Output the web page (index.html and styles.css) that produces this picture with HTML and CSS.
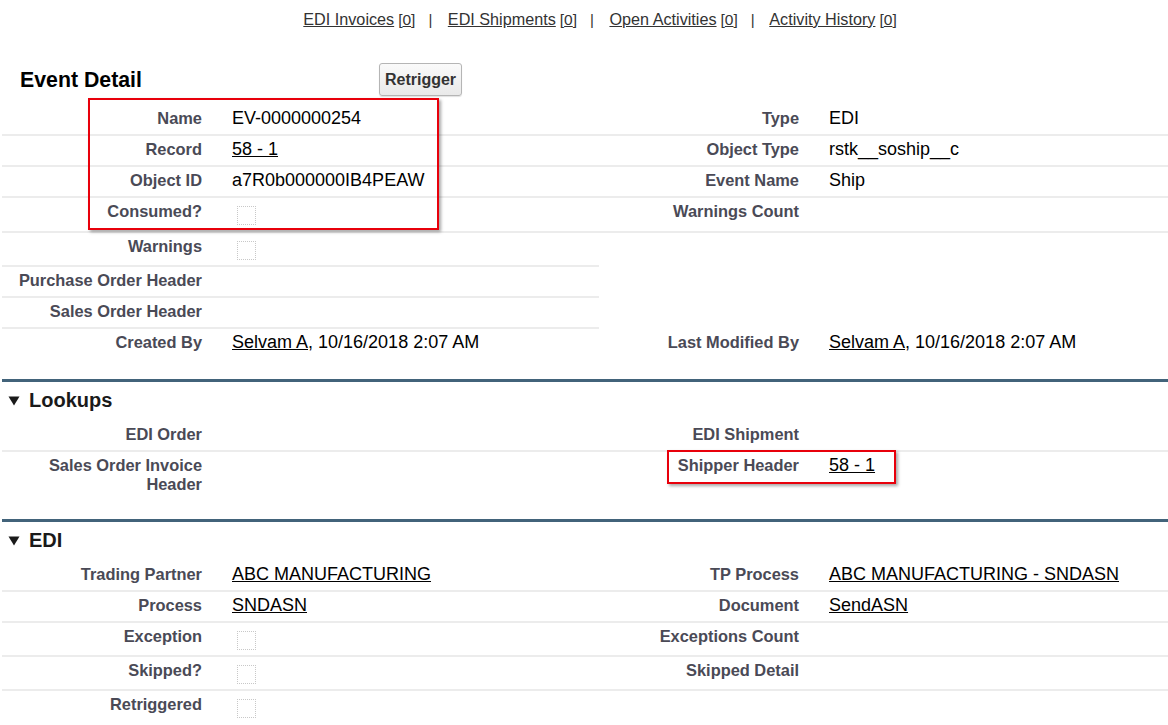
FILE: index.html
```html
<!DOCTYPE html>
<html>
<head>
<meta charset="utf-8">
<link rel="stylesheet" href="styles.css">
</head>
<body>
<div class="page">
  <nav class="toplinks">
    <a href="#" class="tl">EDI Invoices</a><span class="cnt">[<u>0</u>]</span><span class="sep">|</span>
    <a href="#" class="tl">EDI Shipments</a><span class="cnt">[<u>0</u>]</span><span class="sep">|</span>
    <a href="#" class="tl">Open Activities</a><span class="cnt">[<u>0</u>]</span><span class="sep">|</span>
    <a href="#" class="tl">Activity History</a><span class="cnt">[<u>0</u>]</span>
  </nav>

  <div class="pbheader">
    <h2 class="pbtitle">Event Detail</h2>
    <button class="btn">Retrigger</button>
  </div>

  <div class="detail">
    <div class="row">
      <div class="half"><div class="lbl">Name</div><div class="val">EV-0000000254</div></div>
      <div class="half"><div class="lbl">Type</div><div class="val">EDI</div></div>
    </div>
    <div class="row">
      <div class="half"><div class="lbl">Record</div><div class="val"><a href="#">58 - 1</a></div></div>
      <div class="half"><div class="lbl">Object Type</div><div class="val">rstk__soship__c</div></div>
    </div>
    <div class="row">
      <div class="half"><div class="lbl">Object ID</div><div class="val">a7R0b000000IB4PEAW</div></div>
      <div class="half"><div class="lbl">Event Name</div><div class="val">Ship</div></div>
    </div>
    <div class="row row-consumed">
      <div class="half tall"><div class="lbl">Consumed?</div><div class="val"><span class="cb"></span></div></div>
      <div class="half tall"><div class="lbl">Warnings Count</div><div class="val"></div></div>
    </div>
    <div class="row">
      <div class="half tall"><div class="lbl">Warnings</div><div class="val"><span class="cb"></span></div></div>
      <div class="half empty"></div>
    </div>
    <div class="row">
      <div class="half"><div class="lbl">Purchase Order Header</div><div class="val"></div></div>
      <div class="half empty"></div>
    </div>
    <div class="row">
      <div class="half"><div class="lbl">Sales Order Header</div><div class="val"></div></div>
      <div class="half empty"></div>
    </div>
    <div class="row last">
      <div class="half"><div class="lbl">Created By</div><div class="val"><a href="#">Selvam A</a>, 10/16/2018 2:07 AM</div></div>
      <div class="half"><div class="lbl">Last Modified By</div><div class="val"><a href="#">Selvam A</a>, 10/16/2018 2:07 AM</div></div>
    </div>
  </div>

  <section class="section sec-lookups">
    <h3 class="sechead"><svg class="tri" width="12" height="10" viewBox="0 0 12 10"><polygon points="0.5,0.5 11.5,0.5 6,9.5" fill="#1a1a1a"/></svg>Lookups</h3>
    <div class="row">
      <div class="half"><div class="lbl">EDI Order</div><div class="val"></div></div>
      <div class="half"><div class="lbl">EDI Shipment</div><div class="val"></div></div>
    </div>
    <div class="row last">
      <div class="half"><div class="lbl">Sales Order Invoice Header</div><div class="val"></div></div>
      <div class="half"><div class="lbl">Shipper Header</div><div class="val"><a href="#">58 - 1</a></div></div>
    </div>
  </section>

  <section class="section sec-edi">
    <h3 class="sechead"><svg class="tri" width="12" height="10" viewBox="0 0 12 10"><polygon points="0.5,0.5 11.5,0.5 6,9.5" fill="#1a1a1a"/></svg>EDI</h3>
    <div class="row">
      <div class="half"><div class="lbl">Trading Partner</div><div class="val"><a href="#">ABC MANUFACTURING</a></div></div>
      <div class="half"><div class="lbl">TP Process</div><div class="val"><a href="#">ABC MANUFACTURING - SNDASN</a></div></div>
    </div>
    <div class="row">
      <div class="half"><div class="lbl">Process</div><div class="val"><a href="#">SNDASN</a></div></div>
      <div class="half"><div class="lbl">Document</div><div class="val"><a href="#">SendASN</a></div></div>
    </div>
    <div class="row">
      <div class="half tall"><div class="lbl">Exception</div><div class="val"><span class="cb"></span></div></div>
      <div class="half tall"><div class="lbl">Exceptions Count</div><div class="val"></div></div>
    </div>
    <div class="row">
      <div class="half tall"><div class="lbl">Skipped?</div><div class="val"><span class="cb"></span></div></div>
      <div class="half tall"><div class="lbl">Skipped Detail</div><div class="val"></div></div>
    </div>
    <div class="row last">
      <div class="half tall"><div class="lbl">Retriggered</div><div class="val"><span class="cb"></span></div></div>
      <div class="half empty"></div>
    </div>
  </section>

  <div class="hl hl-1"></div>
  <div class="hl hl-2"></div>
</div>
</body>
</html>
```

FILE: styles.css
```css
html, body {
  margin: 0;
  padding: 0;
  background: #fff;
  overflow: hidden;
}
body {
  font-family: "Liberation Sans", Arial, sans-serif;
  color: #000;
}
.page {
  position: relative;
  width: 1198px;
  padding-left: 2px;
  box-sizing: border-box;
}
.toplinks {
  text-align: center;
  padding-top: 9px;
  padding-bottom: 1px;
  line-height: 20px;
  height: 20px;
  font-size: 16.2px;
  color: #333;
}
.toplinks a.tl {
  color: #333;
  text-decoration: underline;
}
.toplinks .cnt {
  font-size: 15.5px;
  margin-left: 4px;
}
.toplinks .cnt u { text-decoration: underline; }
.toplinks .sep {
  display: inline-block;
  margin: 0 11px 0 13px;
  font-size: 15px;
}
.pbheader {
  display: grid;
  grid-template-columns: 359px auto;
  justify-content: start;
  align-items: center;
  padding-left: 18px;
  margin-top: 33px;
  margin-bottom: 9px;
}
.pbtitle {
  margin: 0;
  font-size: 21.3px;
  font-weight: bold;
  color: #000;
  position: relative;
  top: 1px;
}
.btn {
  font-family: "Liberation Sans", Arial, sans-serif;
  font-weight: bold;
  font-size: 16px;
  color: #333;
  height: 33px;
  width: 83px;
  padding: 0;
  border: 1px solid #b5b5b5;
  border-radius: 3px;
  background: linear-gradient(#fafafa, #e9e9e9);
  box-shadow: 0 1px 1px rgba(0,0,0,0.12);
}
.row {
  display: grid;
  grid-template-columns: 597px 597px;
}
.half {
  display: grid;
  grid-template-columns: 210px 387px;
  border-bottom: 2px solid #ececec;
  min-height: 29px;
}
.half.empty { border-bottom-color: transparent; }
.row.last .half { border-bottom-color: transparent; }
.lbl {
  text-align: right;
  padding: 4px 10px 6px 10px;
  font-size: 16.4px;
  line-height: 19px;
  font-weight: bold;
  color: #4a4a56;
}
.val {
  padding: 4px 10px 6px 20px;
  font-size: 18px;
  line-height: 19px;
  color: #000;
}
.half.tall { min-height: 32px; }
.row-consumed .half.tall { min-height: 33px; }
.half.tall .val { padding-bottom: 4px; }
.val a {
  color: #000;
  text-decoration: underline;
}
.cb {
  display: block;
  width: 17px;
  height: 17px;
  margin: 4px 0 0 5px;
  border: 1px dotted #c8c8c8;
}
.section {
  border-top: 3px solid #42637a;
}
.sechead {
  margin: 0;
  height: 39px;
  box-sizing: border-box;
  padding: 6px 0 0 6px;
  display: flex;
  align-items: flex-start;
  font-size: 20px;
  line-height: 24px;
  font-weight: bold;
  color: #1a1a1a;
}
.tri { margin: 8px 9px 0 0; }
.sec-lookups { margin-top: 19px; }
.sec-edi { margin-top: 17px; }
.hl {
  position: absolute;
  border: 2px solid #e8000b;
  box-shadow: 2px 2px 3px rgba(0,0,0,0.35);
  box-sizing: border-box;
}
.hl-1 { left: 88px; top: 98px; width: 351px; height: 132px; }
.hl-2 { left: 667px; top: 450px; width: 229px; height: 34px; }
```
